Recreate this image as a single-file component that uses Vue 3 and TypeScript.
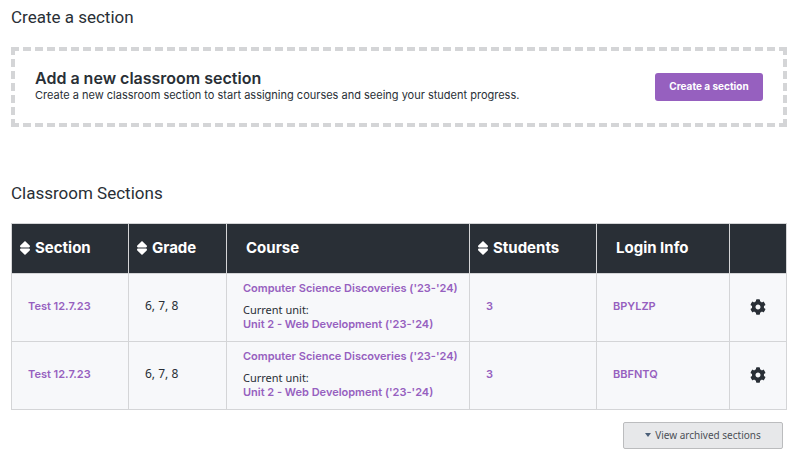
<script setup lang="ts">
interface Section {
  id: number
  name: string
  grades: string
  course: string
  unit: string
  students: number
  code: string
}

interface Column {
  key: string
  label: string
  sortable: boolean
}

const columns: Column[] = [
  { key: 'section', label: 'Section', sortable: true },
  { key: 'grade', label: 'Grade', sortable: true },
  { key: 'course', label: 'Course', sortable: false },
  { key: 'students', label: 'Students', sortable: true },
  { key: 'login', label: 'Login Info', sortable: false },
  { key: 'actions', label: '', sortable: false },
]

const sections: Section[] = [
  {
    id: 1,
    name: 'Test 12.7.23',
    grades: '6, 7, 8',
    course: "Computer Science Discoveries ('23-'24)",
    unit: "Unit 2 - Web Development ('23-'24)",
    students: 3,
    code: 'BPYLZP',
  },
  {
    id: 2,
    name: 'Test 12.7.23',
    grades: '6, 7, 8',
    course: "Computer Science Discoveries ('23-'24)",
    unit: "Unit 2 - Web Development ('23-'24)",
    students: 3,
    code: 'BBFNTQ',
  },
]
</script>

<template>
  <main class="page">
    <section>
      <h2 class="heading">Create a section</h2>
      <div class="callout">
        <div class="callout-body">
          <h3 class="callout-title">Add a new classroom section</h3>
          <p class="callout-text">
            Create a new classroom section to start assigning courses and seeing your student progress.
          </p>
        </div>
        <button type="button" class="primary">Create a section</button>
      </div>
    </section>

    <section class="listing">
      <h2 class="heading">Classroom Sections</h2>
      <table class="table">
        <colgroup>
          <col v-for="c in columns" :key="c.key" :class="'col-' + c.key" />
        </colgroup>
        <thead>
          <tr>
            <th v-for="c in columns" :key="c.key" scope="col">
              <button v-if="c.sortable" type="button" class="sort">
                <svg class="sort-icon" viewBox="0 0 10 14" aria-hidden="true">
                  <path d="M5 0 9.700 4.500Q10.500 6.400 9 6.400H1Q-.5 6.400 .3 4.500ZM5 14 .3 9.500Q-.5 7.600 1 7.600H9Q10.500 7.600 9.700 9.500Z" />
                </svg>
                <span>{{ c.label }}</span>
              </button>
              <span v-else class="plain">{{ c.label }}</span>
            </th>
          </tr>
        </thead>
        <tbody>
          <tr v-for="s in sections" :key="s.id">
            <td><a href="#">{{ s.name }}</a></td>
            <td class="grades">{{ s.grades }}</td>
            <td>
              <a href="#">{{ s.course }}</a>
              <div class="unit">
                <div>Current unit:</div>
                <a href="#">{{ s.unit }}</a>
              </div>
            </td>
            <td><a href="#">{{ s.students }}</a></td>
            <td><a href="#">{{ s.code }}</a></td>
            <td class="actions">
              <button type="button" class="gear" aria-label="Section options">
                <svg viewBox="0 0 512 512" aria-hidden="true">
                  <path d="M487.400 315.700l-42.600-24.600c4.300-23.200 4.300-47 0-70.200l42.600-24.600c4.900-2.800 7.100-8.600 5.500-14-11.100-35.600-30-67.800-54.700-94.600-3.800-4.100-10-5.100-14.800-2.300L380.800 110c-17.900-15.400-38.500-27.300-60.800-35.100V25.800c0-5.600-3.900-10.500-9.400-11.700-36.700-8.200-74.300-7.800-109.200 0-5.500 1.200-9.400 6.100-9.400 11.700V75c-22.200 7.900-42.800 19.800-60.800 35.100L88.700 85.500c-4.900-2.800-11-1.900-14.800 2.300-24.700 26.700-43.600 58.900-54.700 94.600-1.700 5.400.6 11.200 5.500 14L67.300 221c-4.300 23.200-4.300 47 0 70.200l-42.600 24.600c-4.900 2.800-7.100 8.600-5.500 14 11.100 35.600 30 67.800 54.700 94.600 3.800 4.100 10 5.100 14.800 2.300l42.600-24.600c17.900 15.400 38.500 27.300 60.800 35.100v49.200c0 5.600 3.900 10.500 9.400 11.700 36.700 8.200 74.300 7.800 109.200 0 5.500-1.200 9.400-6.100 9.400-11.700v-49.200c22.200-7.900 42.800-19.800 60.800-35.100l42.600 24.600c4.900 2.800 11 1.900 14.800-2.300 24.700-26.700 43.600-58.900 54.700-94.600 1.500-5.500-.7-11.300-5.600-14.100zM256 336c-44.100 0-80-35.900-80-80s35.900-80 80-80 80 35.900 80 80-35.900 80-80 80z" />
                </svg>
              </button>
            </td>
          </tr>
        </tbody>
      </table>
      <div class="footer">
        <button type="button" class="archived">
          <svg class="caret" viewBox="0 0 6 4" aria-hidden="true"><path d="M0 0H6L3 4Z" /></svg>
          <span>View archived sections</span>
        </button>
      </div>
    </section>
  </main>
</template>

<style>
body {
  background: #fff;
}
</style>

<style scoped>
.page {
  padding: 5px 4px 6px 11px;
  color: #292f36;
  font-family: 'Noto Sans', sans-serif;
  font-size: 11px;
  line-height: 14px;
}

button {
  font-family: inherit;
  cursor: pointer;
}

.heading {
  margin: 0 0 18px;
  font-family: Roboto, sans-serif;
  font-size: 17px;
  font-weight: 400;
  line-height: 24px;
}

.callout {
  display: flex;
  align-items: center;
  justify-content: space-between;
  gap: 20px;
  box-sizing: border-box;
  min-height: 80px;
  padding: 16px 20px;
  border: 4px dashed #d4d5d7;
}

.callout-body {
  padding-bottom: 4px;
  font-family: Inter, sans-serif;
}

.callout-title {
  margin: 0;
  font-size: 16px;
  font-weight: 600;
  line-height: 20px;
}

.callout-text {
  margin: 0;
}

.primary {
  flex: none;
  min-width: 108px;
  height: 28px;
  padding: 0 12px 2px;
  border: 0;
  border-radius: 3px;
  background: #9660bf;
  color: #fff;
  font-family: Inter, sans-serif;
  font-size: 10px;
  font-weight: 700;
}

.listing {
  margin-top: 54px;
}

.table {
  width: 100%;
  table-layout: fixed;
  border-collapse: collapse;
  border: 1px solid #bbbcbe;
}

.col-section { width: 117px; }
.col-grade { width: 98px; }
.col-students { width: 127px; }
.col-login { width: 133px; }
.col-actions { width: 57px; }

th {
  height: 47px;
  padding: 0 8px 2px;
  border: 1px solid #d4d5d7;
  background: #292f36;
  color: #fff;
  font-family: Inter, sans-serif;
  font-size: 15px;
  font-weight: 700;
  line-height: 20px;
  text-align: left;
}

.sort {
  display: flex;
  align-items: center;
  gap: 5px;
  padding: 0;
  border: 0;
  background: none;
  color: inherit;
  font-size: inherit;
  font-weight: inherit;
  line-height: inherit;
}

.sort-icon {
  width: 10px;
  height: 14px;
  fill: currentColor;
}

.plain {
  padding-left: 11px;
}

td {
  height: 64px;
  padding: 0 0 3px 16px;
  border: 1px solid #d4d5d7;
  background: #f7f8fa;
  white-space: nowrap;
}

.grades {
  font-size: 12px;
}

a {
  color: #9660bf;
  font-family: Inter, sans-serif;
  font-weight: 600;
  text-decoration: none;
}

.unit {
  margin-top: 8px;
}

td.actions {
  padding: 0 1px 1px 0;
  text-align: center;
}

.gear {
  padding: 0;
  border: 0;
  background: none;
  vertical-align: middle;
}

.gear svg {
  display: block;
  width: 16px;
  height: 16px;
  fill: #292f36;
}

.footer {
  display: flex;
  justify-content: flex-end;
  padding: 12px 4px 0 0;
}

.archived {
  display: flex;
  align-items: center;
  justify-content: center;
  gap: 4px;
  min-width: 160px;
  height: 27px;
  padding: 0 12px 1px;
  border: 1px solid #bbbcbe;
  border-radius: 2px;
  background: #e7e8ea;
  color: #4c5057;
  font-size: 10px;
}

.caret {
  width: 6px;
  height: 4px;
  fill: #4b5f78;
}
</style>
